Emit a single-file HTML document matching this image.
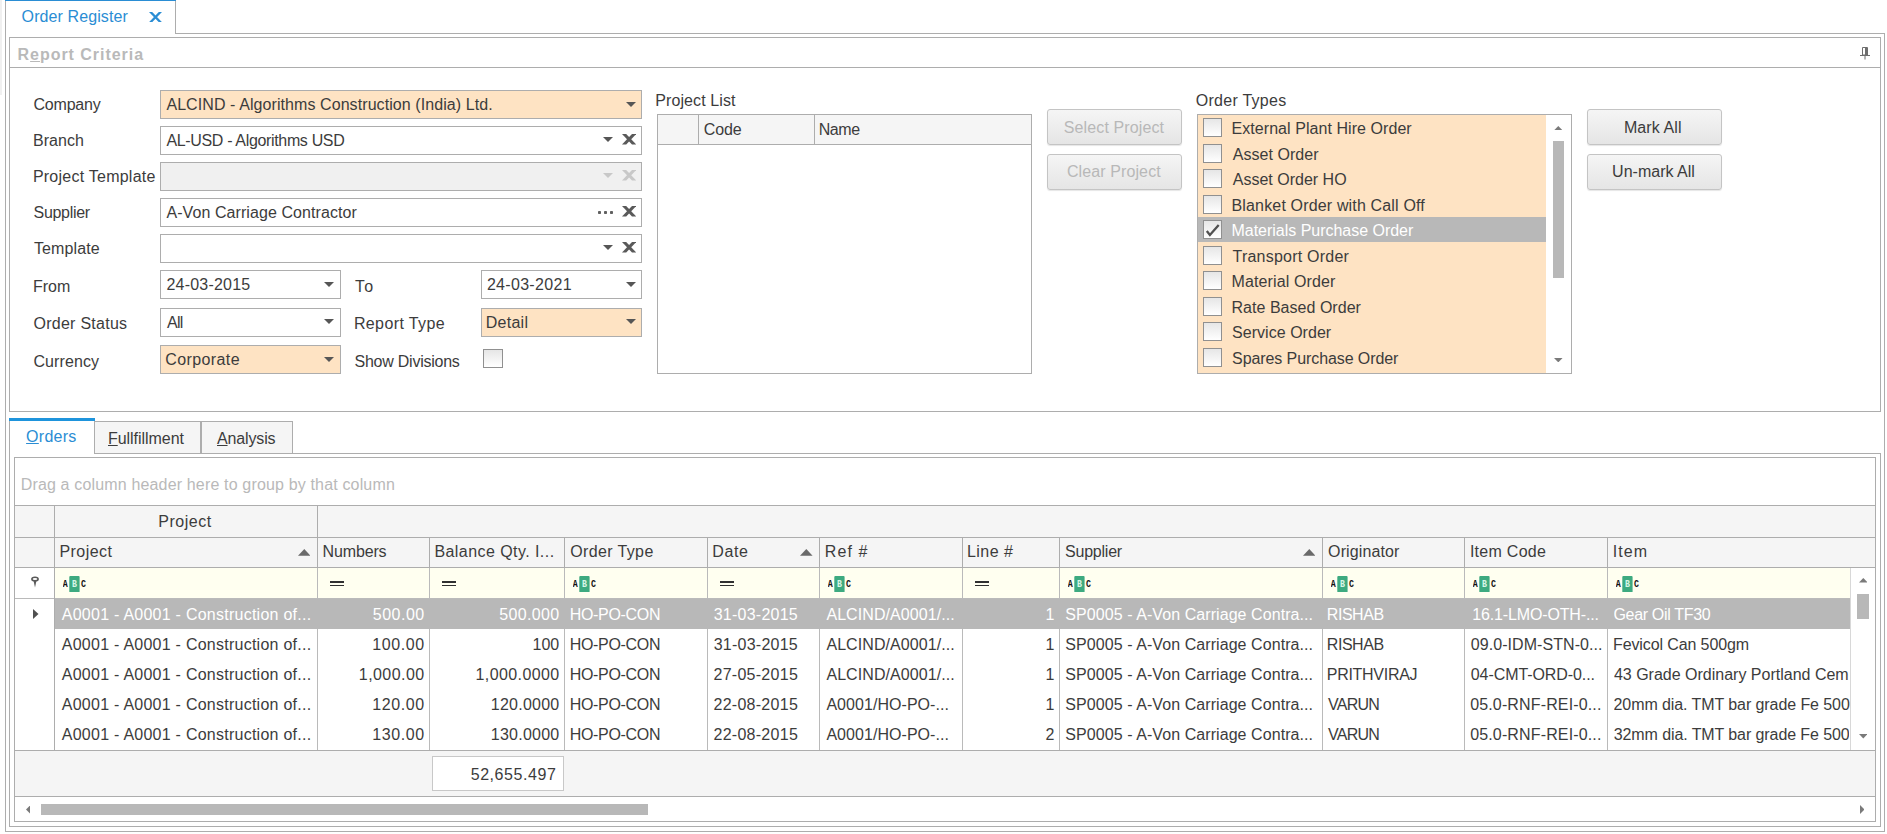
<!DOCTYPE html>
<html><head><meta charset="utf-8"><title>Order Register</title>
<style>
html,body{margin:0;padding:0;background:#fff;}
body{width:1887px;height:834px;position:relative;overflow:hidden;font-family:"Liberation Sans",sans-serif;font-size:16px;color:#3c3c3c;}
body div, body svg{position:absolute;}
.t{height:20px;line-height:20px;white-space:nowrap;}
.u{text-decoration:underline;}
</style></head><body>

<div style="left:0px;top:0px;width:2px;height:95px;background:#f0f0f0"></div>
<div style="left:5px;top:0px;width:1px;height:832px;background:#adadad"></div>
<div style="left:1884px;top:33px;width:1px;height:799px;background:#adadad"></div>
<div style="left:5px;top:831px;width:1880px;height:1px;background:#adadad"></div>
<div style="left:5px;top:0px;width:171px;height:1px;background:#2a8dd4"></div>
<div style="left:175px;top:1px;width:1px;height:33px;background:#adadad"></div>
<div style="left:175px;top:33px;width:1710px;height:1px;background:#adadad"></div>
<div class="t" style="left:21.6px;top:7px;letter-spacing:0.1px;color:#2a8dd4;">Order Register</div>
<svg style="left:148.8px;top:11.7px" width="13" height="10.2" viewBox="0 0 13 10.2"><polygon points="0,0 3.2,0 13,10.2 9.8,10.2" fill="#2a8dd4"/><polygon points="13,0 9.8,0 0,10.2 3.2,10.2" fill="#2a8dd4"/></svg>
<div style="left:9px;top:37px;width:1872px;height:375px;background:#fff;border:1px solid #adadad;box-sizing:border-box;"></div>
<div style="left:10px;top:67px;width:1870px;height:1px;background:#adadad"></div>
<div class="t" style="left:17.6px;top:45px;letter-spacing:0.96px;color:#b9b9b9;font-weight:bold;">R<span class="u">e</span>port Criteria</div>
<svg style="left:1859px;top:47px" width="12" height="13" viewBox="0 0 12 13"><path d="M3.5,0.5 H8.5 V8 H3.5 Z" fill="none" stroke="#6e6e6e" stroke-width="1"/><rect x="6" y="1" width="2.5" height="7" fill="#6e6e6e"/><path d="M1,8.5 H11 M6,9 V12.5" stroke="#6e6e6e" stroke-width="1" fill="none"/></svg>
<div class="t" style="left:33.4px;top:95px;letter-spacing:-0.18px;">Company</div>
<div class="t" style="left:32.9px;top:131px;letter-spacing:0.08px;">Branch</div>
<div class="t" style="left:32.9px;top:167px;letter-spacing:0.24px;">Project Template</div>
<div class="t" style="left:33.5px;top:203px;letter-spacing:-0.29px;">Supplier</div>
<div class="t" style="left:33.9px;top:239px;letter-spacing:0.13px;">Template</div>
<div class="t" style="left:32.9px;top:277px;letter-spacing:0.03px;">From</div>
<div class="t" style="left:33.5px;top:314px;letter-spacing:0.26px;">Order Status</div>
<div class="t" style="left:33.4px;top:352px;letter-spacing:0.1px;">Currency</div>
<div style="left:160px;top:90px;width:482px;height:29px;background:#fee3c3;border:1px solid #adadad;box-sizing:border-box;"></div>
<div class="t" style="left:166.4px;top:95px;letter-spacing:0.08px;">ALCIND - Algorithms Construction (India) Ltd.</div>
<svg style="left:625.6px;top:101.8px" width="10" height="5" viewBox="0 0 10 5"><polygon points="0,0 10,0 5.0,5" fill="#565656"/></svg>
<div style="left:160px;top:126px;width:482px;height:29px;background:#fff;border:1px solid #adadad;box-sizing:border-box;"></div>
<div class="t" style="left:166.4px;top:131px;letter-spacing:-0.34px;">AL-USD - Algorithms USD</div>
<svg style="left:603px;top:137.3px" width="10" height="5" viewBox="0 0 10 5"><polygon points="0,0 10,0 5.0,5" fill="#565656"/></svg>
<svg style="left:622px;top:134.4px" width="14.2" height="10.4" viewBox="0 0 14.2 10.4"><polygon points="0,0 4.2,0 14.2,10.4 10.0,10.4" fill="#5a5a5a"/><polygon points="14.2,0 10.0,0 0,10.4 4.2,10.4" fill="#5a5a5a"/></svg>
<div style="left:160px;top:162px;width:482px;height:29px;background:#f0f0f0;border:1px solid #adadad;box-sizing:border-box;"></div>
<svg style="left:603px;top:173.3px" width="10" height="5" viewBox="0 0 10 5"><polygon points="0,0 10,0 5.0,5" fill="#c8c8c8"/></svg>
<svg style="left:622px;top:170.4px" width="14.2" height="10.4" viewBox="0 0 14.2 10.4"><polygon points="0,0 4.2,0 14.2,10.4 10.0,10.4" fill="#c8c8c8"/><polygon points="14.2,0 10.0,0 0,10.4 4.2,10.4" fill="#c8c8c8"/></svg>
<div style="left:160px;top:198px;width:482px;height:29px;background:#fff;border:1px solid #adadad;box-sizing:border-box;"></div>
<div class="t" style="left:166.4px;top:203px;letter-spacing:0.08px;">A-Von Carriage Contractor</div>
<div style="left:598.3px;top:210.9px;width:3.1px;height:3.1px;background:#606060;border-radius:0.8px;"></div>
<div style="left:604.35px;top:210.9px;width:3.1px;height:3.1px;background:#606060;border-radius:0.8px;"></div>
<div style="left:610.4px;top:210.9px;width:3.1px;height:3.1px;background:#606060;border-radius:0.8px;"></div>
<svg style="left:622px;top:206.3px" width="14.2" height="10.4" viewBox="0 0 14.2 10.4"><polygon points="0,0 4.2,0 14.2,10.4 10.0,10.4" fill="#5a5a5a"/><polygon points="14.2,0 10.0,0 0,10.4 4.2,10.4" fill="#5a5a5a"/></svg>
<div style="left:160px;top:234px;width:482px;height:29px;background:#fff;border:1px solid #adadad;box-sizing:border-box;"></div>
<svg style="left:603px;top:245.3px" width="10" height="5" viewBox="0 0 10 5"><polygon points="0,0 10,0 5.0,5" fill="#565656"/></svg>
<svg style="left:622px;top:242.4px" width="14.2" height="10.4" viewBox="0 0 14.2 10.4"><polygon points="0,0 4.2,0 14.2,10.4 10.0,10.4" fill="#5a5a5a"/><polygon points="14.2,0 10.0,0 0,10.4 4.2,10.4" fill="#5a5a5a"/></svg>
<div style="left:160px;top:270px;width:181px;height:29px;background:#fff;border:1px solid #adadad;box-sizing:border-box;"></div>
<div class="t" style="left:166.5px;top:275px;letter-spacing:0.21px;">24-03-2015</div>
<svg style="left:324px;top:281.8px" width="10" height="5" viewBox="0 0 10 5"><polygon points="0,0 10,0 5.0,5" fill="#565656"/></svg>
<div class="t" style="left:354.9px;top:277px;letter-spacing:1.3px;">To</div>
<div style="left:481px;top:270px;width:161px;height:29px;background:#fff;border:1px solid #adadad;box-sizing:border-box;"></div>
<div class="t" style="left:486.9px;top:275px;letter-spacing:0.31px;">24-03-2021</div>
<svg style="left:625.6px;top:281.8px" width="10" height="5" viewBox="0 0 10 5"><polygon points="0,0 10,0 5.0,5" fill="#565656"/></svg>
<div style="left:160px;top:308px;width:181px;height:29px;background:#fff;border:1px solid #adadad;box-sizing:border-box;"></div>
<div class="t" style="left:167px;top:313px;letter-spacing:-0.75px;">All</div>
<svg style="left:324px;top:319.3px" width="10" height="5" viewBox="0 0 10 5"><polygon points="0,0 10,0 5.0,5" fill="#565656"/></svg>
<div class="t" style="left:353.9px;top:314px;letter-spacing:0.39px;">Report Type</div>
<div style="left:481px;top:308px;width:161px;height:29px;background:#fee3c3;border:1px solid #adadad;box-sizing:border-box;"></div>
<div class="t" style="left:485.7px;top:313px;letter-spacing:0.28px;">Detail</div>
<svg style="left:625.6px;top:319.3px" width="10" height="5" viewBox="0 0 10 5"><polygon points="0,0 10,0 5.0,5" fill="#565656"/></svg>
<div style="left:160px;top:345px;width:181px;height:29px;background:#fee3c3;border:1px solid #adadad;box-sizing:border-box;"></div>
<div class="t" style="left:165.2px;top:350px;letter-spacing:0.4px;">Corporate</div>
<svg style="left:324px;top:357px" width="10" height="5" viewBox="0 0 10 5"><polygon points="0,0 10,0 5.0,5" fill="#565656"/></svg>
<div class="t" style="left:354.5px;top:352px;letter-spacing:-0.24px;">Show Divisions</div>
<div style="left:483px;top:349px;width:19.5px;height:19px;border:1px solid #909090;box-sizing:border-box;background:linear-gradient(#e6e6e6,#ffffff);"></div>
<div class="t" style="left:655.2px;top:91px;letter-spacing:0.11px;">Project List</div>
<div style="left:657px;top:114px;width:375px;height:260px;background:#fff;border:1px solid #adadad;box-sizing:border-box;"></div>
<div style="left:658px;top:115px;width:373px;height:29px;background:#f5f5f5;"></div>
<div style="left:658px;top:144px;width:373px;height:1px;background:#adadad"></div>
<div style="left:697.5px;top:115px;width:1px;height:29px;background:#adadad"></div>
<div style="left:813.5px;top:115px;width:1px;height:29px;background:#adadad"></div>
<div class="t" style="left:703.7px;top:120px;letter-spacing:-0.1px;">Code</div>
<div class="t" style="left:818.7px;top:120px;letter-spacing:-0.43px;">Name</div>
<div style="left:1047px;top:109px;width:135px;height:36px;box-sizing:border-box;border:1px solid #c4c4c4;border-radius:3px;background:linear-gradient(#f5f5f5,#e5e5e5);box-shadow:0 1px 1px rgba(0,0,0,0.10)"></div>
<div class="t" style="left:1063.8px;top:118px;letter-spacing:0.12px;color:#b8b8b8;">Select Project</div>
<div style="left:1047px;top:154px;width:135px;height:36px;box-sizing:border-box;border:1px solid #c4c4c4;border-radius:3px;background:linear-gradient(#f5f5f5,#e5e5e5);box-shadow:0 1px 1px rgba(0,0,0,0.10)"></div>
<div class="t" style="left:1066.9px;top:162px;letter-spacing:0.11px;color:#b8b8b8;">Clear Project</div>
<div class="t" style="left:1195.7px;top:91px;letter-spacing:0.28px;">Order Types</div>
<div style="left:1197px;top:114px;width:375px;height:260px;background:#fee3c3;border:1px solid #adadad;box-sizing:border-box;"></div>
<div style="left:1546px;top:115px;width:25px;height:258px;background:#fff;"></div>
<div style="left:1203px;top:118.2px;width:19.2px;height:19px;border:1px solid #909090;box-sizing:border-box;background:linear-gradient(#e6e6e6,#ffffff);"></div>
<div class="t" style="left:1231.5px;top:119px;letter-spacing:0.06px;">External Plant Hire Order</div>
<div style="left:1203px;top:143.7px;width:19.2px;height:19px;border:1px solid #909090;box-sizing:border-box;background:linear-gradient(#e6e6e6,#ffffff);"></div>
<div class="t" style="left:1232.8px;top:145px;letter-spacing:0.03px;">Asset Order</div>
<div style="left:1203px;top:169.2px;width:19.2px;height:19px;border:1px solid #909090;box-sizing:border-box;background:linear-gradient(#e6e6e6,#ffffff);"></div>
<div class="t" style="left:1232.8px;top:170px;">Asset Order HO</div>
<div style="left:1203px;top:194.7px;width:19.2px;height:19px;border:1px solid #909090;box-sizing:border-box;background:linear-gradient(#e6e6e6,#ffffff);"></div>
<div class="t" style="left:1231.5px;top:196px;letter-spacing:0.16px;">Blanket Order with Call Off</div>
<div style="left:1198px;top:217px;width:348px;height:25px;background:#b8b8b8;"></div>
<div style="left:1203px;top:220.2px;width:19.2px;height:19px;border:1px solid #909090;box-sizing:border-box;background:linear-gradient(#e6e6e6,#ffffff);"></div>
<div class="t" style="left:1231.5px;top:221px;letter-spacing:-0.02px;color:#fff;">Materials Purchase Order</div>
<svg style="left:1205px;top:222px" width="16" height="16" viewBox="0 0 16 16"><path d="M1.8,9 L4.9,12.9 L13.7,3" stroke="#505050" stroke-width="2.3" fill="none"/></svg>
<div style="left:1203px;top:245.7px;width:19.2px;height:19px;border:1px solid #909090;box-sizing:border-box;background:linear-gradient(#e6e6e6,#ffffff);"></div>
<div class="t" style="left:1232.5px;top:247px;letter-spacing:0.23px;">Transport Order</div>
<div style="left:1203px;top:271.2px;width:19.2px;height:19px;border:1px solid #909090;box-sizing:border-box;background:linear-gradient(#e6e6e6,#ffffff);"></div>
<div class="t" style="left:1231.5px;top:272px;letter-spacing:0.13px;">Material Order</div>
<div style="left:1203px;top:296.7px;width:19.2px;height:19px;border:1px solid #909090;box-sizing:border-box;background:linear-gradient(#e6e6e6,#ffffff);"></div>
<div class="t" style="left:1231.5px;top:298px;letter-spacing:0.03px;">Rate Based Order</div>
<div style="left:1203px;top:322.2px;width:19.2px;height:19px;border:1px solid #909090;box-sizing:border-box;background:linear-gradient(#e6e6e6,#ffffff);"></div>
<div class="t" style="left:1232.1px;top:323px;letter-spacing:0.03px;">Service Order</div>
<div style="left:1203px;top:347.7px;width:19.2px;height:19px;border:1px solid #909090;box-sizing:border-box;background:linear-gradient(#e6e6e6,#ffffff);"></div>
<div class="t" style="left:1232.1px;top:349px;letter-spacing:-0.09px;">Spares Purchase Order</div>
<svg style="left:1554.3px;top:125.6px" width="8.6" height="4.4" viewBox="0 0 8.6 4.4"><polygon points="0,4.4 8.6,4.4 4.3,0" fill="#7a7a7a"/></svg>
<svg style="left:1554.3px;top:357.8px" width="8.6" height="4.4" viewBox="0 0 8.6 4.4"><polygon points="0,0 8.6,0 4.3,4.4" fill="#7a7a7a"/></svg>
<div style="left:1552.5px;top:141px;width:11.7px;height:137px;background:#b8b8b8;"></div>
<div style="left:1587px;top:109px;width:135px;height:36px;box-sizing:border-box;border:1px solid #c4c4c4;border-radius:3px;background:linear-gradient(#f5f5f5,#e5e5e5);box-shadow:0 1px 1px rgba(0,0,0,0.10)"></div>
<div class="t" style="left:1623.9px;top:118px;letter-spacing:0.11px;">Mark All</div>
<div style="left:1587px;top:154px;width:135px;height:36px;box-sizing:border-box;border:1px solid #c4c4c4;border-radius:3px;background:linear-gradient(#f5f5f5,#e5e5e5);box-shadow:0 1px 1px rgba(0,0,0,0.10)"></div>
<div class="t" style="left:1612.1px;top:162px;letter-spacing:0.01px;">Un-mark All</div>
<div style="left:9px;top:418px;width:1px;height:409px;background:#adadad"></div>
<div style="left:1880px;top:453px;width:1px;height:374px;background:#adadad"></div>
<div style="left:9px;top:826px;width:1872px;height:1px;background:#adadad"></div>
<div style="left:94px;top:453px;width:1787px;height:1px;background:#adadad"></div>
<div style="left:9px;top:418px;width:85.5px;height:3px;background:#1e94dc"></div>
<div class="t" style="left:26.1px;top:427px;letter-spacing:0.26px;color:#2a8dd4;"><span class="u">O</span>rders</div>
<div style="left:94px;top:421px;width:107px;height:33px;background:#f5f5f5;border:1px solid #adadad;box-sizing:border-box;"></div>
<div class="t" style="left:108px;top:429px;letter-spacing:-0.05px;"><span class="u">F</span>ullfillment</div>
<div style="left:201px;top:421px;width:92px;height:33px;background:#f5f5f5;border:1px solid #adadad;box-sizing:border-box;"></div>
<div class="t" style="left:217px;top:429px;letter-spacing:-0.14px;"><span class="u">A</span>nalysis</div>
<div style="left:14px;top:457px;width:1862px;height:365px;background:#fff;border:1px solid #adadad;box-sizing:border-box;"></div>
<div class="t" style="left:20.7px;top:475px;letter-spacing:0.16px;color:#b9b9b9;">Drag a column header here to group by that column</div>
<div style="left:15px;top:505px;width:1860px;height:1px;background:#adadad"></div>
<div style="left:15px;top:506px;width:1860px;height:61px;background:#f5f5f5;"></div>
<div style="left:15px;top:536.5px;width:1860px;height:1px;background:#adadad"></div>
<div style="left:15px;top:567px;width:1860px;height:1px;background:#adadad"></div>
<div style="left:54px;top:506px;width:1px;height:61px;background:#adadad"></div>
<div style="left:317px;top:506px;width:1px;height:31px;background:#adadad"></div>
<div class="t" style="left:158.3px;top:512px;letter-spacing:0.5px;">Project</div>
<div style="left:317px;top:537px;width:1px;height:30px;background:#adadad"></div>
<div class="t" style="left:59.5px;top:542px;letter-spacing:0.43px;">Project</div>
<div style="left:429px;top:537px;width:1px;height:30px;background:#adadad"></div>
<div class="t" style="left:322.6px;top:542px;letter-spacing:-0.15px;">Numbers</div>
<div style="left:564px;top:537px;width:1px;height:30px;background:#adadad"></div>
<div class="t" style="left:434.4px;top:542px;letter-spacing:0.44px;">Balance Qty. I...</div>
<div style="left:707px;top:537px;width:1px;height:30px;background:#adadad"></div>
<div class="t" style="left:570.3px;top:542px;letter-spacing:0.36px;">Order Type</div>
<div style="left:819px;top:537px;width:1px;height:30px;background:#adadad"></div>
<div class="t" style="left:712.3px;top:542px;letter-spacing:0.6px;">Date</div>
<div style="left:962px;top:537px;width:1px;height:30px;background:#adadad"></div>
<div class="t" style="left:824.8px;top:542px;letter-spacing:1.08px;">Ref #</div>
<div style="left:1059px;top:537px;width:1px;height:30px;background:#adadad"></div>
<div class="t" style="left:967px;top:542px;letter-spacing:0.46px;">Line #</div>
<div style="left:1322px;top:537px;width:1px;height:30px;background:#adadad"></div>
<div class="t" style="left:1065.1px;top:542px;letter-spacing:-0.23px;">Supplier</div>
<div style="left:1464px;top:537px;width:1px;height:30px;background:#adadad"></div>
<div class="t" style="left:1328.1px;top:542px;letter-spacing:0.12px;">Originator</div>
<div style="left:1607px;top:537px;width:1px;height:30px;background:#adadad"></div>
<div class="t" style="left:1469.9px;top:542px;letter-spacing:0.27px;">Item Code</div>
<div class="t" style="left:1612.8px;top:542px;letter-spacing:1.03px;">Item</div>
<svg style="left:297.5px;top:549.2px" width="12.6" height="6.8" viewBox="0 0 12.6 6.8"><polygon points="0,6.8 12.6,6.8 6.3,0" fill="#6a6a6a"/></svg>
<svg style="left:800px;top:549.2px" width="12.6" height="6.8" viewBox="0 0 12.6 6.8"><polygon points="0,6.8 12.6,6.8 6.3,0" fill="#6a6a6a"/></svg>
<svg style="left:1302.5px;top:549.2px" width="12.6" height="6.8" viewBox="0 0 12.6 6.8"><polygon points="0,6.8 12.6,6.8 6.3,0" fill="#6a6a6a"/></svg>
<div style="left:55px;top:568px;width:1795px;height:30.5px;background:#fffff0;"></div>
<div style="left:15px;top:568px;width:39px;height:30.5px;background:#fff;"></div>
<div style="left:15px;top:598px;width:1835px;height:1px;background:#bababa"></div>
<svg style="left:63px;top:575.5px" width="24" height="16.4" viewBox="0 0 24 16.4"><rect x="6.3" y="0" width="10.3" height="16.4" rx="1" fill="#3daa80"/><g font-family="Liberation Mono,monospace" font-weight="bold" font-size="10.6" transform="scale(0.78,1)"><text x="-0.2" y="11.3" fill="#111">A</text><text x="11.6" y="11.3" fill="#d8f5e6">B</text><text x="23" y="11.3" fill="#111">C</text></g></svg>
<div style="left:330px;top:581.1px;width:13.6px;height:1.5px;background:#303030;"></div>
<div style="left:330px;top:584.8px;width:13.6px;height:1.5px;background:#303030;"></div>
<div style="left:442px;top:581.1px;width:13.6px;height:1.5px;background:#303030;"></div>
<div style="left:442px;top:584.8px;width:13.6px;height:1.5px;background:#303030;"></div>
<svg style="left:573px;top:575.5px" width="24" height="16.4" viewBox="0 0 24 16.4"><rect x="6.3" y="0" width="10.3" height="16.4" rx="1" fill="#3daa80"/><g font-family="Liberation Mono,monospace" font-weight="bold" font-size="10.6" transform="scale(0.78,1)"><text x="-0.2" y="11.3" fill="#111">A</text><text x="11.6" y="11.3" fill="#d8f5e6">B</text><text x="23" y="11.3" fill="#111">C</text></g></svg>
<div style="left:720px;top:581.1px;width:13.6px;height:1.5px;background:#303030;"></div>
<div style="left:720px;top:584.8px;width:13.6px;height:1.5px;background:#303030;"></div>
<svg style="left:828px;top:575.5px" width="24" height="16.4" viewBox="0 0 24 16.4"><rect x="6.3" y="0" width="10.3" height="16.4" rx="1" fill="#3daa80"/><g font-family="Liberation Mono,monospace" font-weight="bold" font-size="10.6" transform="scale(0.78,1)"><text x="-0.2" y="11.3" fill="#111">A</text><text x="11.6" y="11.3" fill="#d8f5e6">B</text><text x="23" y="11.3" fill="#111">C</text></g></svg>
<div style="left:975px;top:581.1px;width:13.6px;height:1.5px;background:#303030;"></div>
<div style="left:975px;top:584.8px;width:13.6px;height:1.5px;background:#303030;"></div>
<svg style="left:1068px;top:575.5px" width="24" height="16.4" viewBox="0 0 24 16.4"><rect x="6.3" y="0" width="10.3" height="16.4" rx="1" fill="#3daa80"/><g font-family="Liberation Mono,monospace" font-weight="bold" font-size="10.6" transform="scale(0.78,1)"><text x="-0.2" y="11.3" fill="#111">A</text><text x="11.6" y="11.3" fill="#d8f5e6">B</text><text x="23" y="11.3" fill="#111">C</text></g></svg>
<svg style="left:1331px;top:575.5px" width="24" height="16.4" viewBox="0 0 24 16.4"><rect x="6.3" y="0" width="10.3" height="16.4" rx="1" fill="#3daa80"/><g font-family="Liberation Mono,monospace" font-weight="bold" font-size="10.6" transform="scale(0.78,1)"><text x="-0.2" y="11.3" fill="#111">A</text><text x="11.6" y="11.3" fill="#d8f5e6">B</text><text x="23" y="11.3" fill="#111">C</text></g></svg>
<svg style="left:1473px;top:575.5px" width="24" height="16.4" viewBox="0 0 24 16.4"><rect x="6.3" y="0" width="10.3" height="16.4" rx="1" fill="#3daa80"/><g font-family="Liberation Mono,monospace" font-weight="bold" font-size="10.6" transform="scale(0.78,1)"><text x="-0.2" y="11.3" fill="#111">A</text><text x="11.6" y="11.3" fill="#d8f5e6">B</text><text x="23" y="11.3" fill="#111">C</text></g></svg>
<svg style="left:1616px;top:575.5px" width="24" height="16.4" viewBox="0 0 24 16.4"><rect x="6.3" y="0" width="10.3" height="16.4" rx="1" fill="#3daa80"/><g font-family="Liberation Mono,monospace" font-weight="bold" font-size="10.6" transform="scale(0.78,1)"><text x="-0.2" y="11.3" fill="#111">A</text><text x="11.6" y="11.3" fill="#d8f5e6">B</text><text x="23" y="11.3" fill="#111">C</text></g></svg>
<div style="left:317px;top:568px;width:1px;height:30px;background:#bababa"></div>
<div style="left:429px;top:568px;width:1px;height:30px;background:#bababa"></div>
<div style="left:564px;top:568px;width:1px;height:30px;background:#bababa"></div>
<div style="left:707px;top:568px;width:1px;height:30px;background:#bababa"></div>
<div style="left:819px;top:568px;width:1px;height:30px;background:#bababa"></div>
<div style="left:962px;top:568px;width:1px;height:30px;background:#bababa"></div>
<div style="left:1059px;top:568px;width:1px;height:30px;background:#bababa"></div>
<div style="left:1322px;top:568px;width:1px;height:30px;background:#bababa"></div>
<div style="left:1464px;top:568px;width:1px;height:30px;background:#bababa"></div>
<div style="left:1607px;top:568px;width:1px;height:30px;background:#bababa"></div>
<div style="left:54px;top:568px;width:1px;height:182px;background:#adadad"></div>
<svg style="left:30.2px;top:576.4px" width="10" height="12" viewBox="0 0 10 12"><ellipse cx="5" cy="3" rx="3.1" ry="1.8" fill="none" stroke="#5a5a5a" stroke-width="1.6"/><path d="M3.6,5 L5,11.5 L6.4,5 Z" fill="#5a5a5a"/></svg>
<div style="left:55px;top:598.5px;width:1795px;height:30.5px;background:#b8b8b8;"></div>
<div class="t" style="left:61.8px;top:605px;letter-spacing:0.25px;color:#fff;">A0001 - A0001 - Construction of...</div>
<div class="t" style="left:372.8px;top:605px;letter-spacing:0.5px;color:#fff;">500.00</div>
<div class="t" style="left:499.3px;top:605px;letter-spacing:0.35px;color:#fff;">500.000</div>
<div class="t" style="left:569.7px;top:605px;letter-spacing:-0.32px;color:#fff;">HO-PO-CON</div>
<div class="t" style="left:713.7px;top:605px;letter-spacing:0.24px;color:#fff;">31-03-2015</div>
<div class="t" style="left:826.4px;top:605px;letter-spacing:0.08px;color:#fff;">ALCIND/A0001/...</div>
<div class="t" style="left:1045.4px;top:605px;color:#fff;">1</div>
<div class="t" style="left:1065.3px;top:605px;letter-spacing:0.07px;color:#fff;">SP0005 - A-Von Carriage Contra...</div>
<div class="t" style="left:1326.8px;top:605px;letter-spacing:-0.46px;color:#fff;">RISHAB</div>
<div class="t" style="left:1472.2px;top:605px;letter-spacing:-0.14px;color:#fff;">16.1-LMO-OTH-...</div>
<div class="t" style="left:1613.5px;top:605px;letter-spacing:-0.33px;color:#fff;width:236px;overflow:hidden;">Gear Oil TF30</div>
<div style="left:317px;top:629px;width:1px;height:30px;background:#bababa"></div>
<div style="left:429px;top:629px;width:1px;height:30px;background:#bababa"></div>
<div style="left:564px;top:629px;width:1px;height:30px;background:#bababa"></div>
<div style="left:707px;top:629px;width:1px;height:30px;background:#bababa"></div>
<div style="left:819px;top:629px;width:1px;height:30px;background:#bababa"></div>
<div style="left:962px;top:629px;width:1px;height:30px;background:#bababa"></div>
<div style="left:1059px;top:629px;width:1px;height:30px;background:#bababa"></div>
<div style="left:1322px;top:629px;width:1px;height:30px;background:#bababa"></div>
<div style="left:1464px;top:629px;width:1px;height:30px;background:#bababa"></div>
<div style="left:1607px;top:629px;width:1px;height:30px;background:#bababa"></div>
<div class="t" style="left:61.8px;top:635px;letter-spacing:0.25px;">A0001 - A0001 - Construction of...</div>
<div class="t" style="left:372.2px;top:635px;letter-spacing:0.62px;">100.00</div>
<div class="t" style="left:532.5px;top:635px;">100</div>
<div class="t" style="left:569.7px;top:635px;letter-spacing:-0.32px;">HO-PO-CON</div>
<div class="t" style="left:713.7px;top:635px;letter-spacing:0.24px;">31-03-2015</div>
<div class="t" style="left:826.4px;top:635px;letter-spacing:0.08px;">ALCIND/A0001/...</div>
<div class="t" style="left:1045.4px;top:635px;">1</div>
<div class="t" style="left:1065.3px;top:635px;letter-spacing:0.07px;">SP0005 - A-Von Carriage Contra...</div>
<div class="t" style="left:1326.8px;top:635px;letter-spacing:-0.46px;">RISHAB</div>
<div class="t" style="left:1470.8px;top:635px;letter-spacing:0.06px;">09.0-IDM-STN-0...</div>
<div class="t" style="left:1613px;top:635px;letter-spacing:-0.11px;width:236.5px;overflow:hidden;">Fevicol Can 500gm</div>
<div style="left:317px;top:659px;width:1px;height:30px;background:#bababa"></div>
<div style="left:429px;top:659px;width:1px;height:30px;background:#bababa"></div>
<div style="left:564px;top:659px;width:1px;height:30px;background:#bababa"></div>
<div style="left:707px;top:659px;width:1px;height:30px;background:#bababa"></div>
<div style="left:819px;top:659px;width:1px;height:30px;background:#bababa"></div>
<div style="left:962px;top:659px;width:1px;height:30px;background:#bababa"></div>
<div style="left:1059px;top:659px;width:1px;height:30px;background:#bababa"></div>
<div style="left:1322px;top:659px;width:1px;height:30px;background:#bababa"></div>
<div style="left:1464px;top:659px;width:1px;height:30px;background:#bababa"></div>
<div style="left:1607px;top:659px;width:1px;height:30px;background:#bababa"></div>
<div class="t" style="left:61.8px;top:665px;letter-spacing:0.25px;">A0001 - A0001 - Construction of...</div>
<div class="t" style="left:358.8px;top:665px;letter-spacing:0.44px;">1,000.00</div>
<div class="t" style="left:475.5px;top:665px;letter-spacing:0.4px;">1,000.0000</div>
<div class="t" style="left:569.7px;top:665px;letter-spacing:-0.32px;">HO-PO-CON</div>
<div class="t" style="left:713.5px;top:665px;letter-spacing:0.27px;">27-05-2015</div>
<div class="t" style="left:826.4px;top:665px;letter-spacing:0.08px;">ALCIND/A0001/...</div>
<div class="t" style="left:1045.4px;top:665px;">1</div>
<div class="t" style="left:1065.3px;top:665px;letter-spacing:0.07px;">SP0005 - A-Von Carriage Contra...</div>
<div class="t" style="left:1326.8px;top:665px;letter-spacing:-0.29px;">PRITHVIRAJ</div>
<div class="t" style="left:1470.8px;top:665px;letter-spacing:-0.08px;">04-CMT-ORD-0...</div>
<div class="t" style="left:1613.9px;top:665px;width:235.6px;overflow:hidden;">43 Grade Ordinary Portland Cement</div>
<div style="left:317px;top:689px;width:1px;height:30px;background:#bababa"></div>
<div style="left:429px;top:689px;width:1px;height:30px;background:#bababa"></div>
<div style="left:564px;top:689px;width:1px;height:30px;background:#bababa"></div>
<div style="left:707px;top:689px;width:1px;height:30px;background:#bababa"></div>
<div style="left:819px;top:689px;width:1px;height:30px;background:#bababa"></div>
<div style="left:962px;top:689px;width:1px;height:30px;background:#bababa"></div>
<div style="left:1059px;top:689px;width:1px;height:30px;background:#bababa"></div>
<div style="left:1322px;top:689px;width:1px;height:30px;background:#bababa"></div>
<div style="left:1464px;top:689px;width:1px;height:30px;background:#bababa"></div>
<div style="left:1607px;top:689px;width:1px;height:30px;background:#bababa"></div>
<div class="t" style="left:61.8px;top:695px;letter-spacing:0.25px;">A0001 - A0001 - Construction of...</div>
<div class="t" style="left:372.2px;top:695px;letter-spacing:0.62px;">120.00</div>
<div class="t" style="left:490.8px;top:695px;letter-spacing:0.24px;">120.0000</div>
<div class="t" style="left:569.7px;top:695px;letter-spacing:-0.32px;">HO-PO-CON</div>
<div class="t" style="left:713.5px;top:695px;letter-spacing:0.27px;">22-08-2015</div>
<div class="t" style="left:826.4px;top:695px;letter-spacing:0.05px;">A0001/HO-PO-...</div>
<div class="t" style="left:1045.4px;top:695px;">1</div>
<div class="t" style="left:1065.3px;top:695px;letter-spacing:0.07px;">SP0005 - A-Von Carriage Contra...</div>
<div class="t" style="left:1328px;top:695px;letter-spacing:-0.75px;">VARUN</div>
<div class="t" style="left:1470.2px;top:695px;letter-spacing:0.14px;">05.0-RNF-REI-0...</div>
<div class="t" style="left:1613.5px;top:695px;letter-spacing:-0.08px;width:236px;overflow:hidden;">20mm dia. TMT bar grade Fe 500</div>
<div style="left:317px;top:719px;width:1px;height:31px;background:#bababa"></div>
<div style="left:429px;top:719px;width:1px;height:31px;background:#bababa"></div>
<div style="left:564px;top:719px;width:1px;height:31px;background:#bababa"></div>
<div style="left:707px;top:719px;width:1px;height:31px;background:#bababa"></div>
<div style="left:819px;top:719px;width:1px;height:31px;background:#bababa"></div>
<div style="left:962px;top:719px;width:1px;height:31px;background:#bababa"></div>
<div style="left:1059px;top:719px;width:1px;height:31px;background:#bababa"></div>
<div style="left:1322px;top:719px;width:1px;height:31px;background:#bababa"></div>
<div style="left:1464px;top:719px;width:1px;height:31px;background:#bababa"></div>
<div style="left:1607px;top:719px;width:1px;height:31px;background:#bababa"></div>
<div class="t" style="left:61.8px;top:725px;letter-spacing:0.25px;">A0001 - A0001 - Construction of...</div>
<div class="t" style="left:372.2px;top:725px;letter-spacing:0.62px;">130.00</div>
<div class="t" style="left:490.8px;top:725px;letter-spacing:0.24px;">130.0000</div>
<div class="t" style="left:569.7px;top:725px;letter-spacing:-0.32px;">HO-PO-CON</div>
<div class="t" style="left:713.5px;top:725px;letter-spacing:0.27px;">22-08-2015</div>
<div class="t" style="left:826.4px;top:725px;letter-spacing:0.05px;">A0001/HO-PO-...</div>
<div class="t" style="left:1045.4px;top:725px;">2</div>
<div class="t" style="left:1065.3px;top:725px;letter-spacing:0.07px;">SP0005 - A-Von Carriage Contra...</div>
<div class="t" style="left:1328px;top:725px;letter-spacing:-0.75px;">VARUN</div>
<div class="t" style="left:1470.2px;top:725px;letter-spacing:0.14px;">05.0-RNF-REI-0...</div>
<div class="t" style="left:1613.7px;top:725px;letter-spacing:-0.09px;width:235.8px;overflow:hidden;">32mm dia. TMT bar grade Fe 500</div>
<svg style="left:33.25px;top:609.3px" width="5.5" height="10" viewBox="0 0 5.5 10"><polygon points="0,0 5.5,5.0 0,10" fill="#505050"/></svg>
<div style="left:15px;top:751px;width:1860px;height:46px;background:#f5f5f5;"></div>
<div style="left:15px;top:750px;width:1860px;height:1px;background:#adadad"></div>
<div style="left:15px;top:796px;width:1860px;height:1px;background:#adadad"></div>
<div style="left:432px;top:756px;width:132px;height:35px;background:#fff;border:1px solid #c8c8c8;box-sizing:border-box;"></div>
<div class="t" style="left:470.7px;top:765px;letter-spacing:0.56px;">52,655.497</div>
<div style="left:1851px;top:568px;width:24px;height:182px;background:#fff;"></div>
<div style="left:1850px;top:568px;width:1px;height:182px;background:#d8d8d8"></div>
<svg style="left:1858.5px;top:578.3px" width="8.6" height="4.4" viewBox="0 0 8.6 4.4"><polygon points="0,4.4 8.6,4.4 4.3,0" fill="#7a7a7a"/></svg>
<svg style="left:1858.5px;top:734.2px" width="8.6" height="4.4" viewBox="0 0 8.6 4.4"><polygon points="0,0 8.6,0 4.3,4.4" fill="#7a7a7a"/></svg>
<div style="left:1857px;top:593.5px;width:11.8px;height:25px;background:#b8b8b8;"></div>
<svg style="left:25.7px;top:804.8px" width="4.6" height="9" viewBox="0 0 4.6 9"><polygon points="4.6,0 0,4.5 4.6,9" fill="#7a7a7a"/></svg>
<svg style="left:1859.7px;top:805.3px" width="4.6" height="9" viewBox="0 0 4.6 9"><polygon points="0,0 4.6,4.5 0,9" fill="#7a7a7a"/></svg>
<div style="left:40.6px;top:803.7px;width:607.5px;height:11.6px;background:#b8b8b8;"></div>
</body></html>
